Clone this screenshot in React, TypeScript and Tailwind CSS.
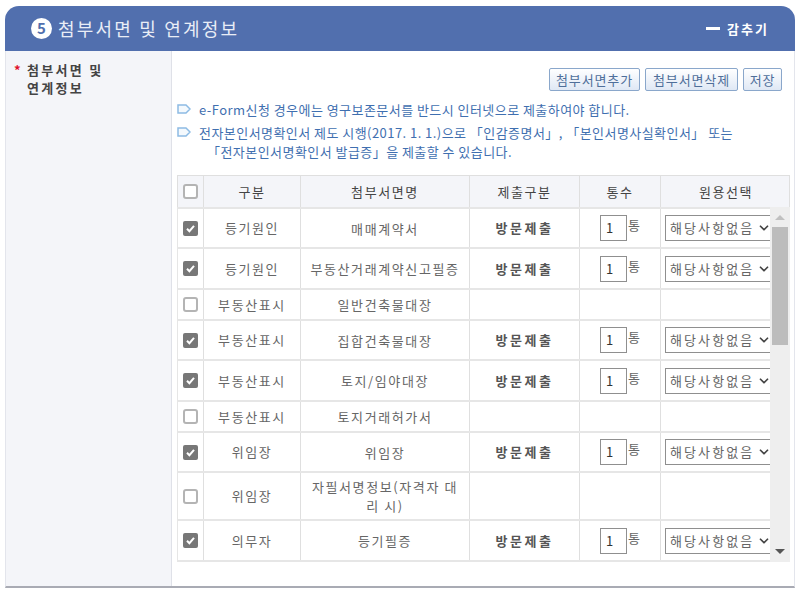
import React from 'react';
import { ChevronDown } from 'lucide-react';

type Row = { cat: string; name: React.ReactNode; checked: boolean; h: string };

const rows: Row[] = [
  { cat: '등기원인', name: '매매계약서', checked: true, h: 'h-[40px]' },
  { cat: '등기원인', name: '부동산거래계약신고필증', checked: true, h: 'h-[41px]' },
  { cat: '부동산표시', name: '일반건축물대장', checked: false, h: 'h-[31px]' },
  { cat: '부동산표시', name: '집합건축물대장', checked: true, h: 'h-[40px]' },
  { cat: '부동산표시', name: '토지/임야대장', checked: true, h: 'h-[41px]' },
  { cat: '부동산표시', name: '토지거래허가서', checked: false, h: 'h-[31px]' },
  { cat: '위임장', name: '위임장', checked: true, h: 'h-[40px]' },
  { cat: '위임장', name: <>자필서명정보(자격자 대<br />리 시)</>, checked: false, h: 'h-[48px]' },
  { cat: '의무자', name: '등기필증', checked: true, h: 'h-[41px]' },
];

const cols = 'grid grid-cols-[26px_97px_169px_110px_81px_130px]';
const cell = 'flex items-center justify-center border-r border-[#dfdfdf] text-center';

function Box({ checked }: { checked: boolean }) {
  if (!checked) {
    return <span className="block h-[15px] w-[15px] rounded-[3px] border-2 border-[#b4b4b4] bg-white" />;
  }
  return (
    <span className="flex h-[15px] w-[15px] items-center justify-center rounded-[2px] bg-[#777777]">
      <svg width="11" height="11" viewBox="0 0 11 11" fill="none">
        <path d="M2 5.8 4.4 8.2 9 2.8" stroke="#fff" strokeWidth="2" />
      </svg>
    </span>
  );
}

function Note({ children }: { children: React.ReactNode }) {
  return (
    <div className="flex gap-[8px]">
      <svg width="14" height="10" viewBox="0 0 14 10" fill="none" className="mt-[4px] shrink-0">
        <path d="M1 1h8l4 4-4 4H1z" stroke="#8dbbe4" strokeWidth="1.5" fill="#f4f9fd" />
      </svg>
      <div>{children}</div>
    </div>
  );
}

export default function App() {
  return (
    <div className="h-[594px] w-[800px] overflow-hidden bg-white pl-[5px] pt-[6px] font-['Noto_Sans_CJK_KR','Liberation_Sans',sans-serif] text-[13px] tracking-[1.6px] text-[#666666]">
      <div className="w-[790px]">
        <header className="flex h-[45px] items-center justify-between rounded-t-[14px] bg-[#516fae] pl-[26px] pr-[26px] text-white">
          <div className="flex items-center gap-[6px]">
            <span className="flex h-[21px] w-[21px] items-center justify-center rounded-full bg-white text-[15px] font-bold tracking-normal text-[#516fae]">5</span>
            <h2 className="text-[18px] font-normal tracking-[2.2px] text-[#e9edf6]">첨부서면 및 연계정보</h2>
          </div>
          <div className="flex items-center gap-[7px] text-[13px] font-bold tracking-[2px]">
            <span className="h-[3px] w-[14px] bg-white" />
            감추기
          </div>
        </header>

        <div className="flex h-[537px] border-b-2 border-l border-r border-b-[#a9abb4] border-l-[#e3e5ec] border-r-[#e3e5ec]">
          <aside className="w-[166px] shrink-0 border-r border-[#dfe1e8] bg-[#f4f5f9] pl-[8px] pt-[10px]">
            <div className="flex gap-[4px] text-[13px] font-bold leading-[18px] tracking-[2.3px] text-[#444444]">
              <span className="text-[#e0102a]">*</span>
              <span>첨부서면 및<br />연계정보</span>
            </div>
          </aside>

          <main className="flex-1 pl-[5px] pt-[17px]">
            <div className="flex justify-end gap-[5px] pr-[12px] text-[13px] tracking-[0.9px] text-[#4f6f9a]">
              <button className="h-[23px] w-[91px] rounded-[2px] border border-[#8aa7cb] bg-gradient-to-b from-white to-[#dfe8f5]">첨부서면추가</button>
              <button className="h-[23px] w-[93px] rounded-[2px] border border-[#8aa7cb] bg-gradient-to-b from-white to-[#dfe8f5]">첨부서면삭제</button>
              <button className="h-[23px] w-[39px] rounded-[2px] border border-[#8aa7cb] bg-gradient-to-b from-white to-[#dfe8f5]">저장</button>
            </div>

            <div className="mt-[9px] flex flex-col gap-[4px] text-[13px] leading-[19px] tracking-[0.45px] text-[#3f6fb0]">
              <Note>e-Form신청 경우에는 영구보존문서를 반드시 인터넷으로 제출하여야 합니다.</Note>
              <Note>
                전자본인서명확인서 제도 시행(2017. 1. 1.)으로 「인감증명서」, 「본인서명사실확인서」 또는
                <div className="pl-[8px]">「전자본인서명확인서 발급증」을 제출할 수 있습니다.</div>
              </Note>
            </div>

            <div className="relative mt-[14px] w-[613px] overflow-hidden">
              <div className={`${cols} h-[32px] border-l border-r border-t border-[#dfdfdf] bg-[#f4f5f9] text-[#444444]`}>
                <div className={cell}><Box checked={false} /></div>
                <div className={cell}>구분</div>
                <div className={cell}>첨부서면명</div>
                <div className={cell}>제출구분</div>
                <div className={cell}>통수</div>
                <div className="flex items-center justify-center">원용선택</div>
              </div>

              {rows.map((row, i) => (
                <div key={i} className={`${cols} ${row.h} border-l border-t-2 border-[#e6e6e6]`}>
                  <div className={cell}><Box checked={row.checked} /></div>
                  <div className={cell}>{row.cat}</div>
                  <div className={`${cell} px-[4px] leading-[19px]`}>{row.name}</div>
                  <div className={`${cell} font-bold tracking-[2.5px] text-[#555555]`}>{row.checked ? '방문제출' : ''}</div>
                  <div className={`${cell} gap-px tracking-normal`}>
                    {row.checked && (
                      <>
                        <span className="flex h-[26px] w-[27px] items-center border border-[#8f8f8f] pl-[5px] text-[#333333]">1</span>
                        <span className="-mt-[6px]">통</span>
                      </>
                    )}
                  </div>
                  <div className="flex items-center pl-[4px]">
                    {row.checked && (
                      <span className="flex h-[26px] w-[110px] shrink-0 items-center gap-[3px] border border-[#8f8f8f] pl-[4px] tracking-[2.1px]">
                        해당사항없음
                        <ChevronDown size={14} strokeWidth={3} className="shrink-0 text-[#444444]" />
                      </span>
                    )}
                  </div>
                </div>
              ))}
              <div className="border-t-2 border-[#e6e6e6]" />

              <div className="absolute bottom-0 right-0 top-[32px] w-[20px] bg-[#eeeeee]">
                <span className="absolute left-[5px] top-[8px] h-0 w-0 border-x-[5px] border-b-[5px] border-x-transparent border-b-[#c0c0c0]" />
                <span className="absolute left-[2px] top-[20px] h-[118px] w-[16px] bg-[#bcbcbc]" />
                <span className="absolute bottom-[8px] left-[5px] h-0 w-0 border-x-[5px] border-t-[5px] border-x-transparent border-t-[#555555]" />
              </div>
            </div>
          </main>
        </div>
      </div>
    </div>
  );
}
